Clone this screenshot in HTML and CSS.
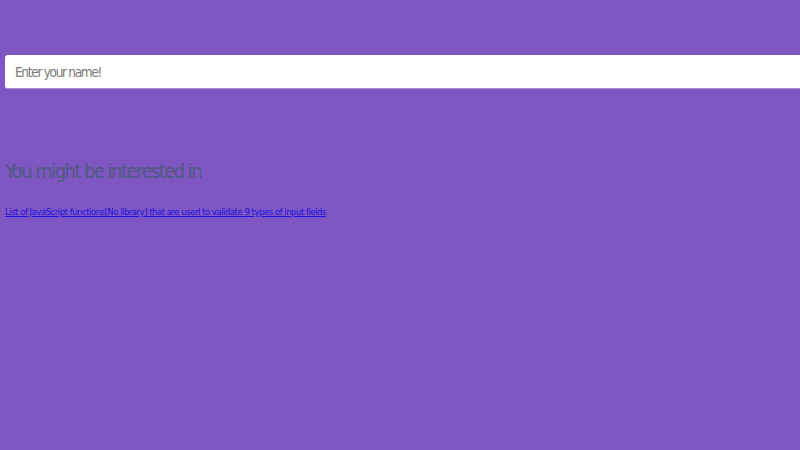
FILE: index.html
```html
<!DOCTYPE html>
<html lang="en">
<head>
<meta charset="utf-8">
<title>Validate</title>
<link rel="stylesheet" href="styles.css">
</head>
<body>
<div class="page">
  <form class="name-form">
    <input class="name-input" type="text" placeholder="Enter your name!">
  </form>
  <section class="related">
    <h2 class="related-title">You might be interested in</h2>
    <a class="related-link" href="#">List of JavaScript functions[No library] that are used to validate 9 types of input fields</a>
  </section>
</div>
</body>
</html>
```

FILE: styles.css
```css
html, body {
  margin: 0;
  padding: 0;
  background: #7e57c2;
  overflow: hidden;
}
body {
  font-family: "DejaVu Sans", sans-serif;
  font-stretch: condensed;
  width: 800px;
  height: 450px;
}
.page {
  padding: 55px 5px 0 5px;
}
.name-form {
  margin: 0;
}
.name-input {
  display: block;
  box-sizing: border-box;
  width: 820px;
  height: 34px;
  margin: 0;
  padding: 0 10px;
  border: none;
  border-bottom: 1px solid #a58fd2;
  border-radius: 3px;
  background: #fffffd;
  font-family: inherit;
  font-stretch: condensed;
  font-size: 13.5px;
  letter-spacing: -1.3px;
  color: #555;
  outline: none;
}
.name-input::placeholder {
  color: #7a7a7a;
}
.related {
  padding-top: 69px;
}
.related-title {
  margin: 0;
  font-weight: normal;
  font-size: 20px;
  letter-spacing: -1.55px;
  line-height: 26px;
  color: #4f5a80;
}
.related-link {
  display: inline-block;
  margin-top: 22px;
  font-size: 9.5px;
  letter-spacing: -0.5px;
  color: #1f10e0;
  text-decoration: underline;
}
```
